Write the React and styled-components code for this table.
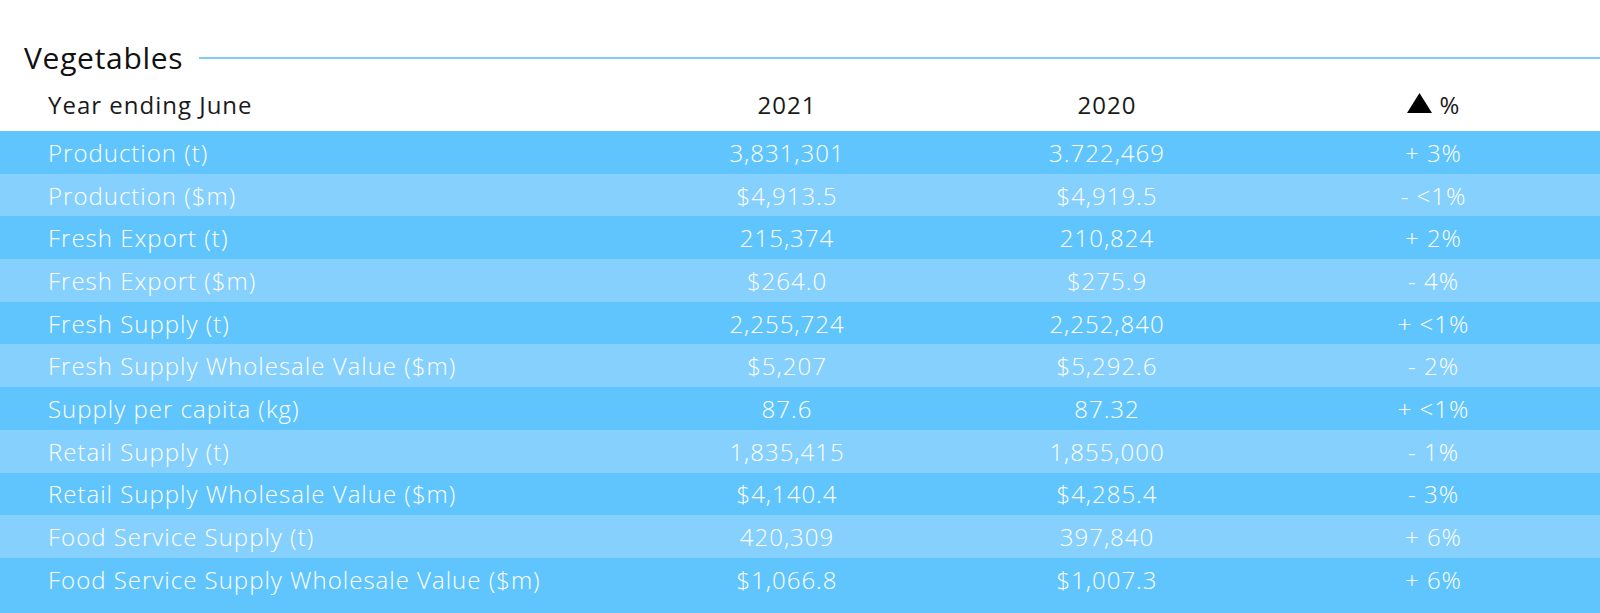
import React from 'react';
import styled, { createGlobalStyle } from 'styled-components';

const GlobalStyle = createGlobalStyle`
  html, body {
    margin: 0;
    padding: 0;
    background: #ffffff;
  }
  body {
    font-family: 'Open Sans', 'Lato', sans-serif;
  }
`;

const rows = [
  ['Production (t)', '3,831,301', '3.722,469', '+ 3%'],
  ['Production ($m)', '$4,913.5', '$4,919.5', '- <1%'],
  ['Fresh Export (t)', '215,374', '210,824', '+ 2%'],
  ['Fresh Export ($m)', '$264.0', '$275.9', '- 4%'],
  ['Fresh Supply (t)', '2,255,724', '2,252,840', '+ <1%'],
  ['Fresh Supply Wholesale Value ($m)', '$5,207', '$5,292.6', '- 2%'],
  ['Supply per capita (kg)', '87.6', '87.32', '+ <1%'],
  ['Retail Supply (t)', '1,835,415', '1,855,000', '- 1%'],
  ['Retail Supply Wholesale Value ($m)', '$4,140.4', '$4,285.4', '- 3%'],
  ['Food Service Supply (t)', '420,309', '397,840', '+ 6%'],
  ['Food Service Supply Wholesale Value ($m)', '$1,066.8', '$1,007.3', '+ 6%'],
];

const App = () => {
  return (
    <Page>
      <GlobalStyle />
      <TitleBar>
        <Title>Vegetables</Title>
        <Rule />
      </TitleBar>
      <HeadRow>
        <Label>Year ending June</Label>
        <Cell>2021</Cell>
        <Cell>2020</Cell>
        <Cell>
          <Change>
            <svg width="25" height="20" viewBox="0 0 25 20">
              <polygon points="12.5,0 25,20 0,20" fill="#000" />
            </svg>
            %
          </Change>
        </Cell>
      </HeadRow>
      <Body>
        {rows.map((r, i) => (
          <Row key={r[0]} shade={i % 2 === 0 ? 'dark' : 'light'}>
            <Label>{r[0]}</Label>
            <Cell>{r[1]}</Cell>
            <Cell>{r[2]}</Cell>
            <Cell>{r[3]}</Cell>
          </Row>
        ))}
      </Body>
    </Page>
  );
};

export default App;

const Page = styled.div`
  width: 1600px;
  height: 613px;
  overflow: hidden;
  padding-top: 37px;
  box-sizing: border-box;
  display: flex;
  flex-direction: column;
`;

const TitleBar = styled.div`
  display: flex;
  align-items: center;
  padding-left: 24px;
  height: 40px;
`;

const Title = styled.div`
  font-size: 30px;
  font-weight: 500;
  letter-spacing: 0.7px;
  color: #111;
`;

const Rule = styled.div`
  flex: 1;
  height: 2px;
  background: #7ccdf0;
  margin-left: 16px;
  margin-top: 2px;
`;

const grid = `
  display: grid;
  grid-template-columns: 579px 320px 320px 1fr;
  align-items: center;
  padding-left: 48px;
  font-size: 24px;
  letter-spacing: 1px;
`;

const HeadRow = styled.div`
  ${grid}
  height: 54px;
  flex-shrink: 0;
  color: #1a1a1a;
  font-weight: 400;
`;

const Body = styled.div`
  flex: 1;
  background: #61c5fd;
`;

const Row = styled.div`
  ${grid}
  height: 42.7px;
  color: #ffffff;
  font-weight: 300;
  background: ${(p) => (p.shade === 'dark' ? '#61c5fd' : '#86d0fd')};
`;

const Label = styled.div`
  white-space: nowrap;
`;

const Cell = styled.div`
  text-align: center;
  white-space: nowrap;
`;

const Change = styled.span`
  display: inline-flex;
  align-items: center;
  gap: 8px;
  color: #1a1a1a;
  svg {
    margin-top: -2px;
  }
`;
